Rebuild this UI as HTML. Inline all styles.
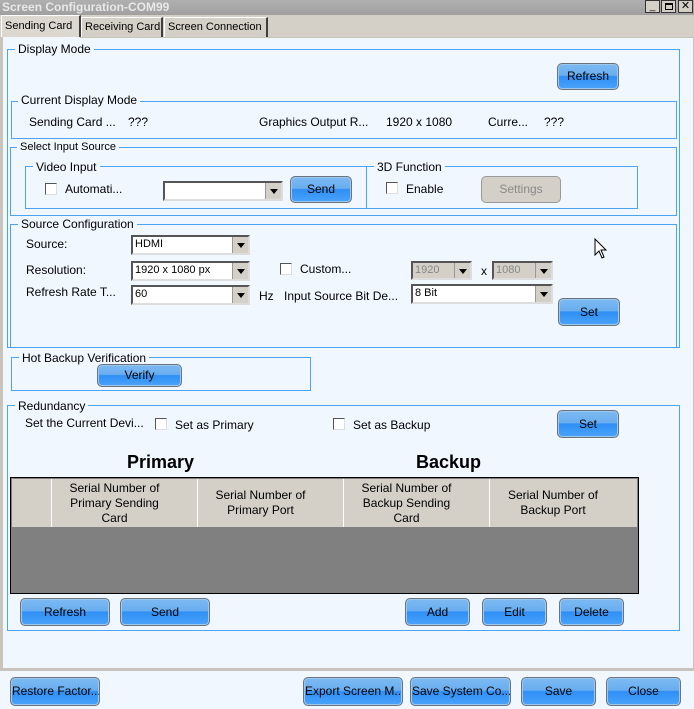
<!DOCTYPE html>
<html><head><meta charset="utf-8"><style>
*{box-sizing:border-box;margin:0;padding:0}
body{width:694px;height:709px;position:relative;overflow:hidden;background:#f0f7ff;font-family:"Liberation Sans",Arial,sans-serif;font-size:12px;color:#000}
.a{position:absolute}
.box{position:absolute;border:1px solid #4ba3f2}
.lg{position:absolute;background:#f0f7ff;padding:0 3px;font-size:12px;line-height:13px;white-space:nowrap}
.t{position:absolute;white-space:nowrap;line-height:14px}
.btn{position:absolute;border:1px solid #6b747e;border-radius:5px;background:linear-gradient(#7cb9f2 0%,#6aaef0 45%,#2f8ff5 50%,#4aa3fb 100%);text-align:center;font-size:12px;box-shadow:inset 0 0 0 1px #9cc8ee;white-space:nowrap;overflow:hidden}
.cb{position:absolute;width:12px;height:12px;border:1px solid #555;border-right-color:#ddd;border-bottom-color:#ddd;background:#fff}
.sel{position:absolute;background:#fff;border:2px solid #555;border-right-color:#ddd;border-bottom-color:#ddd;font-size:11px;line-height:15px;padding-left:2px;white-space:nowrap}
.arr{position:absolute;right:0;top:0;width:16px;height:100%;background:#d4d0c8;border-left:1px solid #999}
.arr:after{content:"";position:absolute;left:4px;top:6px;border:4px solid transparent;border-top:5px solid #000}
.tab{position:absolute;top:17px;height:20px;background:#d4d0c8;border:1px solid #fff;border-right:2px solid #404040;border-bottom:none;line-height:18px;padding-left:3px;font-size:11px;white-space:nowrap;overflow:hidden}
</style></head><body>
<div class="a" style="left:0;top:0;width:694px;height:15px;background:linear-gradient(#b0b0b0,#a0a0a0)"></div>
<div class="t" style="left:2px;top:0;font-weight:bold;color:#e8e8e8;font-size:12px;line-height:15px">Screen Configuration-COM99</div>
<div class="a" style="left:645px;top:0;width:15px;height:13px;background:#d4d0c8;border:1px solid #333;font-size:10px;text-align:center;line-height:11px">_</div>
<div class="a" style="left:661px;top:0;width:15px;height:13px;background:#d4d0c8;border:1px solid #333"><div class="a" style="left:3px;top:2px;width:8px;height:7px;border:1px solid #000;border-top-width:2px"></div></div>
<div class="a" style="left:678px;top:0;width:15px;height:13px;background:#d4d0c8;border:1px solid #333;font-size:11px;text-align:center;line-height:11px">✕</div>
<div class="a" style="left:0;top:15px;width:694px;height:24px;background:#d4d0c8"></div>
<div class="tab" style="left:81px;width:82px">Receiving Card</div>
<div class="tab" style="left:164px;width:104px">Screen Connection</div>
<div class="tab" style="left:1px;top:15px;height:24px;width:80px;background:#dcd8d0;line-height:20px">Sending Card</div>
<div class="a" style="left:0;top:37px;width:694px;height:634px;border-left:3px solid #c8c4bc;border-bottom:3px solid #c8c4bc;border-right:1px solid #c8c4bc;background:#f0f7ff"></div>
<div class="a" style="left:80px;top:37px;width:614px;height:1px;background:#c8c4bc"></div>

<div class="box" style="left:7px;top:49px;width:673px;height:299px"></div>
<div class="lg" style="left:15px;top:43px">Display Mode</div>
<div class="btn" style="left:557px;top:63px;width:62px;height:27px;line-height:25px">Refresh</div>
<div class="box" style="left:11px;top:101px;width:666px;height:38px"></div>
<div class="lg" style="left:18px;top:94px">Current Display Mode</div>
<div class="t" style="left:29px;top:115px">Sending Card ...</div>
<div class="t" style="left:128px;top:115px">???</div>
<div class="t" style="left:259px;top:115px">Graphics Output R...</div>
<div class="t" style="left:386px;top:115px">1920 x 1080</div>
<div class="t" style="left:488px;top:115px">Curre...</div>
<div class="t" style="left:544px;top:115px">???</div>

<div class="box" style="left:10px;top:147px;width:667px;height:69px"></div>
<div class="lg" style="left:17px;top:141px;font-size:11px">Select Input Source</div>
<div class="box" style="left:25px;top:166px;width:342px;height:43px"></div>
<div class="lg" style="left:33px;top:161px">Video Input</div>
<div class="cb" style="left:45px;top:183px"></div>
<div class="t" style="left:65px;top:182px">Automati...</div>
<div class="sel" style="left:163px;top:181px;width:120px;height:20px"><div class="arr"></div></div>
<div class="btn" style="left:290px;top:176px;width:62px;height:27px;line-height:25px">Send</div>
<div class="box" style="left:366px;top:166px;width:272px;height:43px"></div>
<div class="lg" style="left:374px;top:161px">3D Function</div>
<div class="cb" style="left:386px;top:182px"></div>
<div class="t" style="left:406px;top:182px">Enable</div>
<div class="a" style="left:481px;top:176px;width:80px;height:27px;border:1px solid #999;border-radius:5px;background:#d4d0c8;color:#8a8a8a;text-align:center;line-height:25px">Settings</div>

<div class="box" style="left:10px;top:224px;width:667px;height:124px"></div>
<div class="lg" style="left:18px;top:218px">Source Configuration</div>
<div class="t" style="left:26px;top:237px">Source:</div>
<div class="sel" style="left:131px;top:235px;width:119px;height:20px">HDMI<div class="arr"></div></div>
<div class="t" style="left:26px;top:263px">Resolution:</div>
<div class="sel" style="left:131px;top:261px;width:119px;height:20px">1920 x 1080 px<div class="arr"></div></div>
<div class="cb" style="left:280px;top:263px"></div>
<div class="t" style="left:300px;top:262px">Custom...</div>
<div class="sel" style="left:411px;top:261px;width:61px;height:19px;background:#d4d0c8;color:#888">1920<div class="arr" style="width:16px;background:#d4d0c8"></div></div>
<div class="t" style="left:481px;top:264px">x</div>
<div class="sel" style="left:492px;top:261px;width:61px;height:19px;background:#d4d0c8;color:#888">1080<div class="arr" style="width:16px;background:#d4d0c8"></div></div>
<div class="t" style="left:26px;top:285px">Refresh Rate T...</div>
<div class="sel" style="left:131px;top:285px;width:119px;height:20px">60<div class="arr"></div></div>
<div class="t" style="left:259px;top:289px">Hz</div>
<div class="t" style="left:284px;top:289px">Input Source Bit De...</div>
<div class="sel" style="left:411px;top:284px;width:142px;height:20px">8 Bit<div class="arr"></div></div>
<div class="btn" style="left:558px;top:298px;width:62px;height:28px;line-height:26px">Set</div>
<svg class="a" style="left:594px;top:238px" width="14" height="22" viewBox="0 0 14 22"><path d="M1 1V17L5 13L8 20L10 19L7 12H12Z" fill="#fff" stroke="#000" stroke-width="1"/></svg>

<div class="box" style="left:11px;top:357px;width:300px;height:34px"></div>
<div class="lg" style="left:19px;top:352px">Hot Backup Verification</div>
<div class="btn" style="left:97px;top:364px;width:85px;height:23px;line-height:21px">Verify</div>

<div class="box" style="left:7px;top:405px;width:673px;height:226px;border-top-color:#4ba3f2"></div>
<div class="a" style="left:8px;top:595px;width:630px;height:35px;background:#f0f7ff"></div>
<div class="a" style="left:638px;top:406px;width:41px;height:224px;background:#f0f7ff"></div>
<div class="lg" style="left:15px;top:400px">Redundancy</div>
<div class="t" style="left:25px;top:416px">Set the Current Devi...</div>
<div class="cb" style="left:155px;top:418px"></div>
<div class="t" style="left:175px;top:418px">Set as Primary</div>
<div class="cb" style="left:333px;top:418px"></div>
<div class="t" style="left:353px;top:418px">Set as Backup</div>
<div class="btn" style="left:557px;top:410px;width:62px;height:28px;line-height:26px">Set</div>
<div class="t" style="left:127px;top:452px;font-size:18px;font-weight:bold;line-height:20px">Primary</div>
<div class="t" style="left:416px;top:452px;font-size:18px;font-weight:bold;line-height:20px">Backup</div>

<div class="a" style="left:10px;top:477px;width:629px;height:117px;border:1px solid #000;background:#808080"></div>
<div class="a" style="left:12px;top:479px;width:625px;height:48px;background:#d4d0c8"></div>
<div class="a" style="left:51px;top:479px;width:1px;height:48px;background:#fff"></div>
<div class="a" style="left:197px;top:479px;width:1px;height:48px;background:#fff"></div>
<div class="a" style="left:343px;top:479px;width:1px;height:48px;background:#fff"></div>
<div class="a" style="left:489px;top:479px;width:1px;height:48px;background:#fff"></div>
<div class="t" style="left:42px;top:481px;width:145px;text-align:center;line-height:15px">Serial Number of<br>Primary Sending<br>Card</div>
<div class="t" style="left:188px;top:488px;width:145px;text-align:center;line-height:15px">Serial Number of<br>Primary Port</div>
<div class="t" style="left:334px;top:481px;width:145px;text-align:center;line-height:15px">Serial Number of<br>Backup Sending<br>Card</div>
<div class="t" style="left:480px;top:488px;width:146px;text-align:center;line-height:15px">Serial Number of<br>Backup Port</div>

<div class="btn" style="left:20px;top:598px;width:90px;height:28px;line-height:26px">Refresh</div>
<div class="btn" style="left:120px;top:598px;width:90px;height:28px;line-height:26px">Send</div>
<div class="btn" style="left:405px;top:598px;width:65px;height:28px;line-height:26px">Add</div>
<div class="btn" style="left:482px;top:598px;width:65px;height:28px;line-height:26px">Edit</div>
<div class="btn" style="left:559px;top:598px;width:65px;height:28px;line-height:26px">Delete</div>

<div class="btn" style="left:10px;top:677px;width:90px;height:29px;line-height:27px;text-align:left;padding-left:1px">Restore Factor...</div>
<div class="btn" style="left:303px;top:677px;width:100px;height:29px;line-height:27px;text-align:left;padding-left:1px">Export Screen M...</div>
<div class="btn" style="left:410px;top:677px;width:101px;height:29px;line-height:27px;text-align:left;padding-left:1px">Save System Co...</div>
<div class="btn" style="left:521px;top:677px;width:75px;height:29px;line-height:27px">Save</div>
<div class="btn" style="left:606px;top:677px;width:75px;height:29px;line-height:27px">Close</div>
</body></html>
